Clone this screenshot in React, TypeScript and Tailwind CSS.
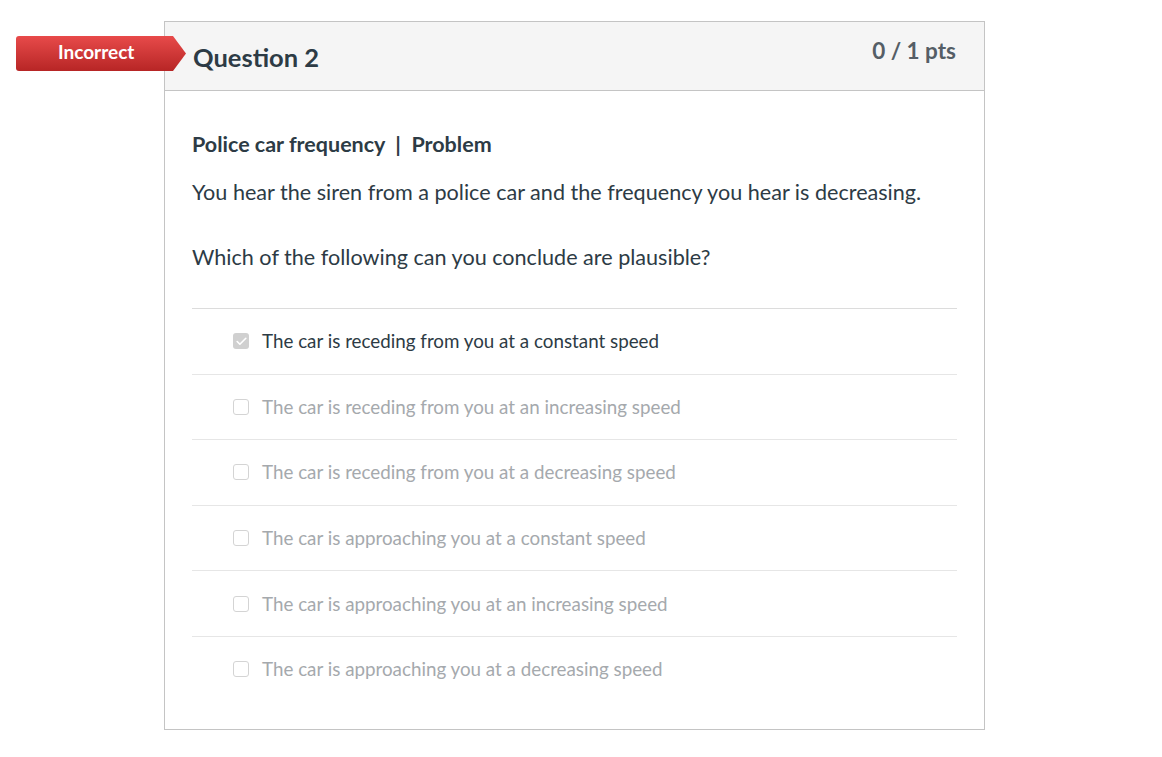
import { Check } from "lucide-react";

const answers = [
  { text: "The car is receding from you at a constant speed", picked: true },
  { text: "The car is receding from you at an increasing speed", picked: false },
  { text: "The car is receding from you at a decreasing speed", picked: false },
  { text: "The car is approaching you at a constant speed", picked: false },
  { text: "The car is approaching you at an increasing speed", picked: false },
  { text: "The car is approaching you at a decreasing speed", picked: false },
];

export default function App() {
  return (
    <main className="min-h-screen bg-white text-[#2d3b45] font-['Lato','Open_Sans',sans-serif] pt-[21px]">
      <div className="relative ml-[164px] w-[821px] border border-[#c4c4c4]">
        {/* badge */}
        <div className="absolute left-[-149px] top-[14px] h-[35px] w-[170px] rounded-l-[3px] bg-gradient-to-b from-[#e84a4a] to-[#b72525] [clip-path:polygon(0_0,157px_0,170px_50%,157px_100%,0_100%)] flex items-center pl-[42px] pb-[3px] text-white text-[19px] font-bold">
          Incorrect
        </div>

        {/* header */}
        <div className="h-[69px] bg-[#f5f5f5] border-b border-[#c4c4c4] flex justify-between px-[28px]">
          <h2 className="pt-[20px] text-[25.5px] leading-[30px] font-bold">Question 2</h2>
          <div className="pt-[15px] text-[22.5px] leading-[28px] font-bold text-[#555e66]">0 / 1 pts</div>
        </div>

        {/* body */}
        <div className="px-[27px] pt-[38px] pb-[27px]">
          <p className="text-[21.5px] leading-[30px] font-bold">Police car frequency&nbsp;&nbsp;|&nbsp;&nbsp;Problem</p>
          <p className="mt-[18px] text-[21.6px] leading-[30px]">
            You hear the siren from a police car and the frequency you hear is decreasing.
          </p>
          <p className="mt-[35px] text-[21.6px] leading-[30px]">Which of the following can you conclude are plausible?</p>

          <div className="mt-[36px]">
            {answers.map((a) => (
              <div
                key={a.text}
                className="h-[65.6px] border-t border-[#e6e6e6] first:border-[#dcdcdc] flex items-center pl-[41px] gap-[13px]"
              >
                {a.picked ? (
                  <span className="w-[16px] h-[16px] rounded-[3px] bg-[#d0d0d0] flex items-center justify-center">
                    <Check size={13} strokeWidth={3} className="text-white" />
                  </span>
                ) : (
                  <span className="w-[16px] h-[16px] rounded-[3px] border border-[#d4d4d4] bg-white" />
                )}
                <span className={`text-[18.8px] leading-[26px] ${a.picked ? "text-[#2d3b45]" : "text-[#a5a9ad]"}`}>
                  {a.text}
                </span>
              </div>
            ))}
          </div>
        </div>
      </div>
    </main>
  );
}
